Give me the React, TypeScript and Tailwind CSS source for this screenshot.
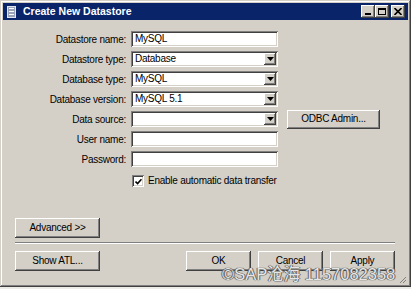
import React from "react";

const sunken =
  "bg-white shadow-[inset_1px_1px_#808080,inset_-1px_-1px_#ffffff,inset_2px_2px_#404040,inset_-2px_-2px_#d4d0c8]";
const raised =
  "bg-[#d4d0c8] shadow-[inset_-1px_-1px_#404040,inset_1px_1px_#ffffff,inset_-2px_-2px_#808080,inset_2px_2px_#d4d0c8]";

function Label({ children }: { children: React.ReactNode }) {
  return <div className="w-[112px] shrink-0 text-right pr-[1px]">{children}</div>;
}

function TextBox({ value }: { value?: string }) {
  return (
    <div className={`w-[147px] h-[16px] ${sunken} pl-[4px] flex items-center leading-none`}>
      {value}
    </div>
  );
}

function Combo({ value }: { value?: string }) {
  return (
    <div className={`w-[147px] h-[16px] ${sunken} flex items-stretch p-[2px]`}>
      <div className="flex-1 pl-[2px] flex items-center leading-none">{value}</div>
      <div className={`w-[12px] ${raised} flex items-center justify-center`}>
        <svg width="7" height="4" viewBox="0 0 7 4">
          <polygon points="0,0 7,0 3.5,4" fill="#000" />
        </svg>
      </div>
    </div>
  );
}

function Btn({ children, className = "" }: { children: React.ReactNode; className?: string }) {
  return (
    <div className={`${raised} h-[20px] flex items-center justify-center leading-none ${className}`}>
      {children}
    </div>
  );
}

export default function App() {
  return (
    <div className="w-[411px] h-[289px] bg-[#ecebe8] relative overflow-hidden [font-family:'Liberation_Sans',Arial,sans-serif] text-[10px] tracking-[-0.25px] text-black">
      <div className="w-[411px] h-[287px] bg-[#d4d0c8] p-[3px] flex flex-col shadow-[inset_-1px_-1px_#404040,inset_1px_1px_#d4d0c8,inset_-2px_-2px_#808080,inset_2px_2px_#ffffff]">
        {/* Title bar */}
        <div className="h-[17px] bg-[#0a246a] flex items-center pl-[4px] pr-[3px]">
          <svg width="9" height="12" viewBox="0 0 9 12" className="shrink-0">
            <rect x="0.5" y="0.5" width="8" height="11" fill="#9aa4b8" stroke="#dfe4ee" />
            <rect x="2" y="2" width="5" height="1" fill="#ffffff" />
            <rect x="2" y="5" width="5" height="1" fill="#ffffff" />
            <rect x="2" y="8" width="5" height="1" fill="#ffffff" />
          </svg>
          <div className="ml-[7px] text-white font-bold text-[10.5px] tracking-normal leading-none">
            Create New Datastore
          </div>
          <div className="ml-auto flex items-center">
            <div className={`w-[14px] h-[13px] ${raised} relative`}>
              <div className="absolute left-[4px] top-[8px] w-[6px] h-[2px] bg-black" />
            </div>
            <div className={`w-[14px] h-[13px] ${raised} flex items-center justify-center`}>
              <div className="w-[8px] h-[7px] border border-black border-t-2" />
            </div>
            <div className={`ml-[2px] w-[14px] h-[13px] ${raised} flex items-center justify-center`}>
              <svg width="8" height="7" viewBox="0 0 8 7">
                <path d="M0.5 0 L7.5 7 M7.5 0 L0.5 7" stroke="#000" strokeWidth="1.6" />
              </svg>
            </div>
          </div>
        </div>

        {/* Content */}
        <div className="flex-1 flex flex-col pl-[12px] pr-[13px] pt-[11px]">
          <div className="flex flex-col gap-[4px]">
            <div className="h-[16px] flex items-center gap-[4px]">
              <Label>Datastore name:</Label>
              <TextBox value="MySQL" />
            </div>
            <div className="h-[16px] flex items-center gap-[4px]">
              <Label>Datastore type:</Label>
              <Combo value="Database" />
            </div>
            <div className="h-[16px] flex items-center gap-[4px]">
              <Label>Database type:</Label>
              <Combo value="MySQL" />
            </div>
            <div className="h-[16px] flex items-center gap-[4px]">
              <Label>Database version:</Label>
              <Combo value="MySQL 5.1" />
            </div>
            <div className="h-[16px] flex items-center gap-[4px]">
              <Label>Data source:</Label>
              <Combo />
              <Btn className="ml-[5px] w-[93px] !h-[19px] shrink-0">ODBC Admin...</Btn>
            </div>
            <div className="h-[16px] flex items-center gap-[4px]">
              <Label>User name:</Label>
              <TextBox />
            </div>
            <div className="h-[16px] flex items-center gap-[4px]">
              <Label>Password:</Label>
              <TextBox />
            </div>
          </div>

          <div className="mt-[8px] h-[12px] flex items-center pl-[117px]">
            <div className={`w-[12px] h-[12px] ${sunken} flex items-center justify-center`}>
              <svg width="7" height="7" viewBox="0 0 7 7">
                <path d="M0.5 3.5 L2.6 5.6 L6.5 1.2" stroke="#000" strokeWidth="1.6" fill="none" />
              </svg>
            </div>
            <div className="ml-[4px] leading-none">Enable automatic data transfer</div>
          </div>

          <Btn className="mt-[31px] w-[85px]">Advanced &gt;&gt;</Btn>

          <div className="mt-[4px] h-[2px] border-t border-t-[#808080] border-b border-b-white" />

          <div className="mt-[7px] flex items-center">
            <Btn className="w-[85px]">Show ATL...</Btn>
            <Btn className="ml-auto w-[65px]">OK</Btn>
            <Btn className="ml-[7px] w-[65px]">Cancel</Btn>
            <Btn className="ml-[7px] w-[65px]">Apply</Btn>
          </div>
        </div>
      </div>

      <div className="absolute left-[222px] top-[266px] text-[16.5px] leading-none tracking-normal text-[#e6e6e6] [font-family:'Liberation_Sans','Noto_Sans_CJK_SC',sans-serif] [text-shadow:0_0_1px_#555,0_0_1px_#555,1px_0_0_#777,-1px_0_0_#777] pointer-events-none">
        ©SAP沧海 1157082358
      </div>
      <div className="absolute left-[399px] top-[276px] w-[8px] h-[8px] pointer-events-none">
        <svg width="8" height="8" viewBox="0 0 8 8">
          <path d="M7 1 L1 7 M7 4 L4 7" stroke="#808080" strokeWidth="1" />
        </svg>
      </div>
    </div>
  );
}
